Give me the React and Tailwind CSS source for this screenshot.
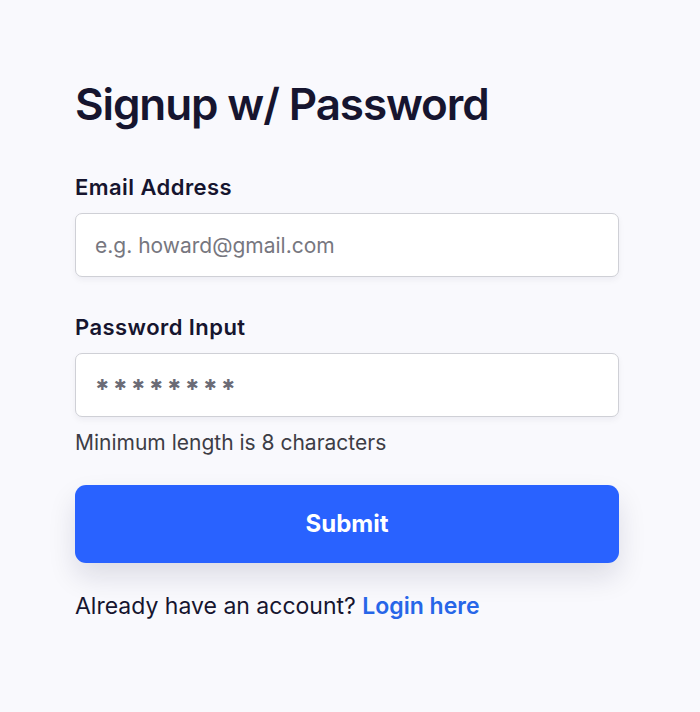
const App = () => {
    return (
        <div className="min-h-screen bg-[#f9f9fd] font-['Inter',sans-serif]">
            <div className="px-[75px] pt-[78px]">
                <h1 className="text-[44px] leading-[52px] font-semibold text-[#16152f] tracking-[-0.025em]">
                    Signup w/ Password
                </h1>

                <form className="mt-[43px] w-[544px]">
                    <label className="block text-[22px] leading-[28px] font-semibold text-[#16152f] tracking-[0.02em]">
                        Email Address
                    </label>
                    <input
                        type="email"
                        placeholder="e.g. howard@gmail.com"
                        className="mt-[12px] block w-full h-[64px] px-[19px] rounded-[7px] border border-[#cfd0d6] bg-white text-[21px] text-[#4b4b55] placeholder:text-[#77777f] shadow-[0_3px_6px_rgba(20,20,60,0.05)] outline-none"
                    />

                    <label className="mt-[36px] block text-[22px] leading-[28px] font-semibold text-[#16152f] tracking-[0.02em]">
                        Password Input
                    </label>
                    <div className="mt-[12px] flex items-center w-full h-[64px] px-[20px] rounded-[7px] border border-[#cfd0d6] bg-white shadow-[0_3px_6px_rgba(20,20,60,0.05)]">
                        <span className="text-[15px] tracking-[5px] text-[#6b6b75]">✱✱✱✱✱✱✱✱</span>
                    </div>
                    <p className="mt-[12px] text-[21px] leading-[28px] text-[#3d3d46]">
                        Minimum length is 8 characters
                    </p>

                    <button
                        type="button"
                        className="mt-[28px] w-full h-[78px] rounded-[11px] bg-[#2962ff] text-white text-[24px] font-bold shadow-[0_14px_28px_rgba(20,20,60,0.12)]"
                    >
                        Submit
                    </button>

                    <div className="mt-[28px] text-[23px] leading-[30px] text-[#16152f]">
                        <span>Already have an account? </span>
                        <a href="#" className="font-semibold text-[#2766e8]">Login here</a>
                    </div>
                </form>
            </div>
        </div>
    );
};

export default App;
